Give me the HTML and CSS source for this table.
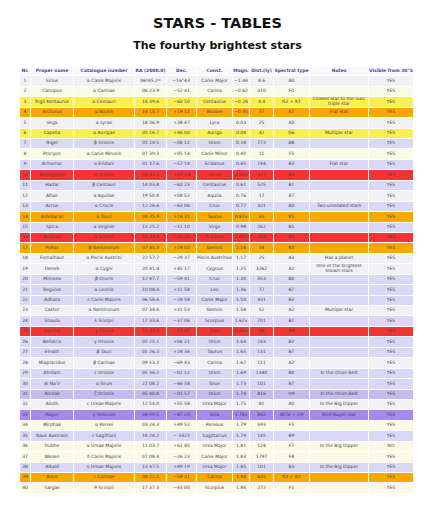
FILE: index.html
```html
<!DOCTYPE html>
<html>
<head>
<meta charset="utf-8">
<link rel="stylesheet" href="styles.css">
</head>
<body>
<h1 class="title">STARS - TABLES</h1>
<h2 class="subtitle">The fourthy brightest stars</h2>
<table class="stars">
<colgroup>
<col class="c-nr"><col class="c-name"><col class="c-cat"><col class="c-ra"><col class="c-dec"><col class="c-const"><col class="c-mag"><col class="c-dist"><col class="c-spec"><col class="c-notes"><col class="c-vis">
</colgroup>
<thead>
<tr class="head"><th>Nr.</th><th>Proper name</th><th>Catalogue number</th><th>RA (2000.0)</th><th>Dec.</th><th>Const.</th><th>Magn.</th><th>Dist.(ly)</th><th>Spectral type</th><th>Notes</th><th>Visible from 30°S</th></tr>
</thead>
<tbody>
<tr class="a"><td>1</td><td>Sirius</td><td>α Canis Majoris</td><td>06<sup>h</sup>45.2<sup>m</sup></td><td>−16°43<sup>'</sup></td><td>Canis Major</td><td>−1.44</td><td>8.6</td><td>A0</td><td></td><td>YES</td></tr>
<tr class="f"><td>2</td><td>Canopus</td><td>α Carinae</td><td>06 23.9</td><td>−52 41</td><td>Carina</td><td>−0.62</td><td>310</td><td>F0</td><td></td><td>YES</td></tr>
<tr class="g"><td>3</td><td>Rigil Kentaurus</td><td>α Centauri</td><td>14 39.6</td><td>−60 50</td><td>Centaurus</td><td>−0.28</td><td>4.4</td><td>G2 + K1</td><td>Closest star to the Sun;<br>triple star</td><td>YES</td></tr>
<tr class="k"><td>4</td><td>Arcturus</td><td>α Bootis</td><td>14 15.7</td><td>+19 11</td><td>Bootes</td><td>−0.05</td><td>37</td><td>K2</td><td>Flat star</td><td>YES</td></tr>
<tr class="a"><td>5</td><td>Vega</td><td>α Lyrae</td><td>18 36.9</td><td>+38 47</td><td>Lyra</td><td>0.03</td><td>25</td><td>A0</td><td></td><td>YES</td></tr>
<tr class="g"><td>6</td><td>Capella</td><td>α Aurigae</td><td>05 16.7</td><td>+46 00</td><td>Auriga</td><td>0.08</td><td>42</td><td>G6</td><td>Multiple star</td><td>YES</td></tr>
<tr class="b"><td>7</td><td>Rigel</td><td>β Orionis</td><td>05 14.5</td><td>−08 12</td><td>Orion</td><td>0.18</td><td>773</td><td>B8</td><td></td><td>YES</td></tr>
<tr class="f"><td>8</td><td>Procyon</td><td>α Canis Minoris</td><td>07 39.3</td><td>+05 14</td><td>Canis Minor</td><td>0.40</td><td>11</td><td>F5</td><td></td><td>YES</td></tr>
<tr class="b"><td>9</td><td>Achernar</td><td>α Eridani</td><td>01 37.6</td><td>−57 14</td><td>Eridanus</td><td>0.45</td><td>144</td><td>B3</td><td>Flat star</td><td>YES</td></tr>
<tr class="m"><td>10</td><td>Betelgeuse</td><td>α Orionis</td><td>05 55.2</td><td>+07 24</td><td>Orion</td><td>0.50v</td><td>427</td><td>M2</td><td></td><td>YES</td></tr>
<tr class="b"><td>11</td><td>Hadar</td><td>β Centauri</td><td>14 03.8</td><td>−60 23</td><td>Centaurus</td><td>0.61</td><td>525</td><td>B1</td><td></td><td>YES</td></tr>
<tr class="a"><td>12</td><td>Altair</td><td>α Aquilae</td><td>19 50.8</td><td>+08 52</td><td>Aquila</td><td>0.76</td><td>17</td><td>A7</td><td></td><td>YES</td></tr>
<tr class="b"><td>13</td><td>Acrux</td><td>α Crucis</td><td>12 26.6</td><td>−63 06</td><td>Crux</td><td>0.77</td><td>321</td><td>B0</td><td>Two unrelated stars</td><td>YES</td></tr>
<tr class="k"><td>14</td><td>Aldebaran</td><td>α Tauri</td><td>04 35.9</td><td>+16 31</td><td>Taurus</td><td>0.87v</td><td>65</td><td>K5</td><td></td><td>YES</td></tr>
<tr class="b"><td>15</td><td>Spica</td><td>α Virginis</td><td>13 25.2</td><td>−11 10</td><td>Virgo</td><td>0.98</td><td>262</td><td>B1</td><td></td><td>YES</td></tr>
<tr class="m"><td>16</td><td>Antares</td><td>α Scorpii</td><td>16 29.4</td><td>−26 26</td><td>Scorpius</td><td>1.06v</td><td>604</td><td>M1</td><td></td><td>YES</td></tr>
<tr class="k"><td>17</td><td>Pollux</td><td>β Geminorum</td><td>07 45.3</td><td>+28 02</td><td>Gemini</td><td>1.16</td><td>34</td><td>K0</td><td></td><td>YES</td></tr>
<tr class="a"><td>18</td><td>Fomalhaut</td><td>α Piscis Austrini</td><td>22 57.7</td><td>−29 37</td><td>Piscis Austrinus</td><td>1.17</td><td>25</td><td>A3</td><td>Has a planet</td><td>YES</td></tr>
<tr class="a"><td>19</td><td>Deneb</td><td>α Cygni</td><td>20 41.4</td><td>+45 17</td><td>Cygnus</td><td>1.25</td><td>3262</td><td>A2</td><td>One of the brightest<br>known stars</td><td>YES</td></tr>
<tr class="b"><td>20</td><td>Mimosa</td><td>β Crucis</td><td>12 47.7</td><td>−59 41</td><td>Crux</td><td>1.30</td><td>353</td><td>B0</td><td></td><td>YES</td></tr>
<tr class="b"><td>21</td><td>Regulus</td><td>α Leonis</td><td>10 08.4</td><td>+11 58</td><td>Leo</td><td>1.36</td><td>77</td><td>B7</td><td></td><td>YES</td></tr>
<tr class="b"><td>22</td><td>Adhara</td><td>ε Canis Majoris</td><td>06 58.6</td><td>−28 58</td><td>Canis Major</td><td>1.50</td><td>431</td><td>B2</td><td></td><td>YES</td></tr>
<tr class="a"><td>23</td><td>Castor</td><td>α Geminorum</td><td>07 34.6</td><td>+31 53</td><td>Gemini</td><td>1.58</td><td>52</td><td>A2</td><td>Multiple star</td><td>YES</td></tr>
<tr class="b"><td>24</td><td>Shaula</td><td>λ Scorpii</td><td>17 33.6</td><td>−37 06</td><td>Scorpius</td><td>1.62v</td><td>701</td><td>B1</td><td></td><td>YES</td></tr>
<tr class="m"><td>25</td><td>Gacrux</td><td>γ Crucis</td><td>12 31.2</td><td>−57 07</td><td>Crux</td><td>1.63v</td><td>88</td><td>M4</td><td></td><td>YES</td></tr>
<tr class="b"><td>26</td><td>Bellatrix</td><td>γ Orionis</td><td>05 25.1</td><td>+06 21</td><td>Orion</td><td>1.64</td><td>243</td><td>B2</td><td></td><td>YES</td></tr>
<tr class="b"><td>27</td><td>Elnath</td><td>β Tauri</td><td>05 26.3</td><td>+28 36</td><td>Taurus</td><td>1.65</td><td>131</td><td>B7</td><td></td><td>YES</td></tr>
<tr class="a"><td>28</td><td>Miaplacidus</td><td>β Carinae</td><td>09 13.2</td><td>−69 43</td><td>Carina</td><td>1.67</td><td>111</td><td>A2</td><td></td><td>YES</td></tr>
<tr class="b"><td>29</td><td>Alnilam</td><td>ε Orionis</td><td>05 36.2</td><td>−01 12</td><td>Orion</td><td>1.69</td><td>1340</td><td>B0</td><td>In the Orion Belt</td><td>YES</td></tr>
<tr class="b"><td>30</td><td>Al Na'ir</td><td>α Gruis</td><td>22 08.2</td><td>−46 58</td><td>Grus</td><td>1.73</td><td>101</td><td>B7</td><td></td><td>YES</td></tr>
<tr class="o"><td>31</td><td>Alnitak</td><td>ζ Orionis</td><td>05 40.8</td><td>−01 57</td><td>Orion</td><td>1.74</td><td>816</td><td>O9</td><td>In the Orion Belt</td><td>YES</td></tr>
<tr class="a"><td>32</td><td>Alioth</td><td>ε Ursae Majoris</td><td>12 54.0</td><td>+55 58</td><td>Ursa Major</td><td>1.75</td><td>81</td><td>A0</td><td>In the Big Dipper</td><td>YES</td></tr>
<tr class="w"><td>33</td><td>Regor</td><td>γ Velorum</td><td>08 09.5</td><td>−47 20</td><td>Vela</td><td>1.78v</td><td>842</td><td>WC8 + O9</td><td>Wolf-Rayet star</td><td>YES</td></tr>
<tr class="f"><td>34</td><td>Mirphak</td><td>α Persei</td><td>03 24.3</td><td>+49 52</td><td>Perseus</td><td>1.79</td><td>593</td><td>F5</td><td></td><td>YES</td></tr>
<tr class="b"><td>35</td><td>Kaus Australis</td><td>ε Sagittarii</td><td>18 24.2</td><td>− 3423</td><td>Sagittarius</td><td>1.79</td><td>145</td><td>B9</td><td></td><td>YES</td></tr>
<tr class="f"><td>36</td><td>Dubhe</td><td>α Ursae Majoris</td><td>11 03.7</td><td>+61 45</td><td>Ursa Major</td><td>1.81</td><td>124</td><td>F7</td><td>In the Big Dipper</td><td>NO</td></tr>
<tr class="f"><td>37</td><td>Wezen</td><td>δ Canis Majoris</td><td>07 08.4</td><td>−26 23</td><td>Canis Major</td><td>1.83</td><td>1797</td><td>F8</td><td></td><td>YES</td></tr>
<tr class="b"><td>38</td><td>Alkaid</td><td>η Ursae Majoris</td><td>13 47.5</td><td>+49 19</td><td>Ursa Major</td><td>1.85</td><td>101</td><td>B3</td><td>In the Big Dipper</td><td>YES</td></tr>
<tr class="k"><td>39</td><td>Avior</td><td>ε Carinae</td><td>08 22.5</td><td>−59 31</td><td>Carina</td><td>1.86</td><td>632</td><td>K3 + B2</td><td></td><td>YES</td></tr>
<tr class="f"><td>40</td><td>Sargas</td><td>θ Scorpii</td><td>17 37.3</td><td>−43 00</td><td>Scorpius</td><td>1.86</td><td>272</td><td>F1</td><td></td><td>YES</td></tr>
</tbody>
</table>
</body>
</html>
```
FILE: styles.css
```css
html, body {
  margin: 0;
  padding: 0;
  background: #ffffff;
}
body {
  font-family: "DejaVu Sans", Verdana, sans-serif;
  color: #111;
}
.title {
  margin: 14px 0 0 0;
  font-size: 14.5px;
  line-height: 18px;
  font-weight: bold;
  text-align: center;
}
.subtitle {
  margin: 7px 0 0 0;
  font-size: 11px;
  line-height: 13px;
  font-weight: bold;
  text-align: center;
}
.stars {
  margin: 14px 0 0 19px;
  border-collapse: separate;
  border-spacing: 1px;
  table-layout: fixed;
  width: 394px;
  font-size: 4.5px;
  line-height: 4.6px;
  color: #444;
}
.c-nr { width: 10px; }
.c-name { width: 42px; }
.c-cat { width: 60px; }
.c-ra { width: 31px; }
.c-dec { width: 29px; }
.c-const { width: 35px; }
.c-mag { width: 16px; }
.c-dist { width: 23px; }
.c-spec { width: 35px; }
.c-notes { width: 58px; }
.c-vis { width: 44px; }
.stars th, .stars td {
  padding: 0;
  text-align: center;
  vertical-align: middle;
  white-space: nowrap;
  overflow: hidden;
}
.stars th {
  height: 8.4px;
  color: #4545b5;
  font-weight: bold;
  background: #f9f9fb;
}
.stars td {
  height: 9.44px;
}
.stars sup {
  font-size: 3px;
  line-height: 0;
  vertical-align: 1.5px;
}
.a td { background: #f1f1f5; }
.f td { background: #fafae5; }
.g td { background: #f8ef55; }
.k td { background: #f8a800; }
.m td { background: #f23434; }
.b td { background: #d9d9f7; }
.o td { background: #c3bbf2; }
.w td { background: #a688ee; }
```
